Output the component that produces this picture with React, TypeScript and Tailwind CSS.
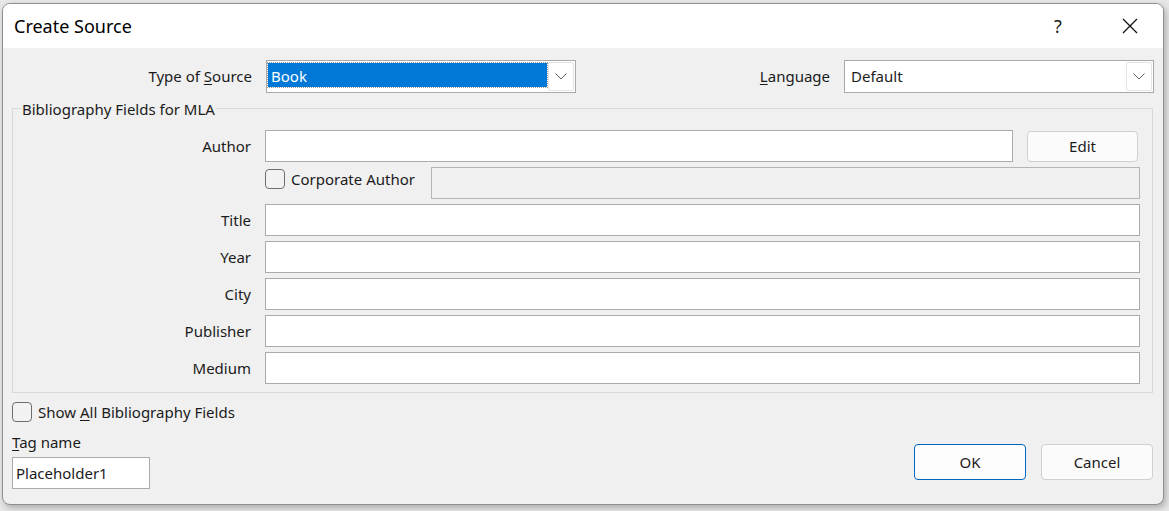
import React from "react";

function Chevron() {
  return (
    <svg width="12" height="7" viewBox="0 0 12 7">
      <path d="M0.5 0.5 L6 6 L11.5 0.5" stroke="#5f5f5f" strokeWidth="1" fill="none" />
    </svg>
  );
}

function Checkbox() {
  return <div className="w-[20px] h-[20px] rounded-[4px] border border-[#6e6e6e] bg-[#f2f2f2] shrink-0" />;
}

function Input({ className = "" }: { className?: string }) {
  return <div className={"h-[32px] border border-[#ababab] bg-white " + className} />;
}

function Row({ label, children }: { label: string; children?: React.ReactNode }) {
  return (
    <div className="flex items-center h-[32px]">
      <div className="w-[238px] text-right shrink-0">{label}</div>
      <div className="ml-[14px] flex-1 flex items-center">{children ?? <Input className="flex-1" />}</div>
    </div>
  );
}

export default function App() {
  return (
    <div className="w-[1169px] h-[511px] bg-[#e7e7e7] pt-[3px] pl-[2px] overflow-hidden font-['Noto_Sans',sans-serif] text-[15px] leading-[20px] text-[#1b1b1b]">
      <div className="w-[1162px] h-[502px] rounded-[8px] border border-[#8f8f8f] bg-[#f0f0f0] overflow-hidden shadow-[2px_3px_6px_rgba(0,0,0,0.25)] flex flex-col">
        {/* Title bar */}
        <div className="h-[44px] bg-white flex items-center pl-[11px] shrink-0">
          <span className="text-[18px] leading-[24px] text-black">Create Source</span>
          <span className="ml-auto w-[20px] text-center text-[18px] leading-[24px] text-[#1b1b1b]">?</span>
          <div className="ml-[54px] mr-[25px]">
            <svg width="16" height="16" viewBox="0 0 16 16">
              <path d="M1 1 L15 15 M15 1 L1 15" stroke="#111" strokeWidth="1.3" fill="none" />
            </svg>
          </div>
        </div>

        {/* Body */}
        <div className="flex-1 pl-[9px] pr-[8px] pt-[12px]">
          {/* Top row */}
          <div className="flex items-center h-[33px]">
            <div className="w-[240px] text-right shrink-0 -mt-[1px]">
              Type of <span className="underline underline-offset-2">S</span>ource
            </div>
            <div className="ml-[14px] w-[310px] h-[33px] border border-[#a9a9a9] bg-white flex p-[1px] shrink-0">
              <div className="flex-1 pt-[1px] pr-[1px]">
                <div className="h-[24px] bg-[#0078d7] outline outline-1 outline-dotted outline-[#9a9a9a] text-white pl-[3px] pt-[1px] flex items-center">
                  Book
                </div>
              </div>
              <div className="w-[26px] border border-[#e4e4e4] rounded-[2px] bg-white flex items-center justify-center">
                <Chevron />
              </div>
            </div>
            <div className="w-[254px] text-right shrink-0 -mt-[1px]">
              <span className="underline underline-offset-2">L</span>anguage
            </div>
            <div className="ml-[14px] w-[310px] h-[33px] border border-[#a9a9a9] bg-white flex p-[1px] shrink-0">
              <div className="flex-1 pl-[5px] flex items-center -mt-[1px]">Default</div>
              <div className="w-[26px] border border-[#e4e4e4] rounded-[2px] bg-white flex items-center justify-center">
                <Chevron />
              </div>
            </div>
          </div>

          {/* Group */}
          <fieldset className="mt-[5px] w-[1141px] border border-[#d9d9d9] pl-0 pr-[12px] pt-[12px] pb-[8px]">
            <legend className="ml-[8px] px-[1px] leading-[20px] translate-y-[1px]">Bibliography Fields for MLA</legend>
            <div className="flex flex-col gap-[5px]">
              <Row label="Author">
                <Input className="flex-1" />
                <button className="ml-[14px] mr-[2px] w-[111px] h-[31px] rounded-[4px] border border-[#d0d0d0] bg-[#fbfbfb] text-[#1b1b1b]">
                  Edit
                </button>
              </Row>
              <div className="flex items-start h-[32px]">
                <div className="w-[252px] shrink-0" />
                <div className="w-[166px] mt-[2px] flex items-center shrink-0">
                  <Checkbox />
                  <span className="ml-[6px] -mt-[1px]">Corporate Author</span>
                </div>
                <div className="flex-1 h-[32px] border border-[#b5b5b5] bg-[#f0f0f0]" />
              </div>
              <Row label="Title" />
              <Row label="Year" />
              <Row label="City" />
              <Row label="Publisher" />
              <Row label="Medium" />
            </div>
          </fieldset>

          {/* Show all */}
          <div className="mt-[9px] flex items-center h-[20px]">
            <Checkbox />
            <span className="ml-[6px]">
              Show <span className="underline underline-offset-2">A</span>ll Bibliography Fields
            </span>
          </div>

          {/* Bottom */}
          <div className="flex items-end">
            <div className="flex flex-col">
              <div className="mt-[10px]">
                <span className="underline underline-offset-2">T</span>ag name
              </div>
              <div className="mt-[5px] w-[138px] h-[32px] border border-[#ababab] bg-white pl-[3px] flex items-center">
                Placeholder1
              </div>
            </div>
            <div className="ml-auto mr-[2px] mb-[9px] flex gap-[15px]">
              <button className="w-[112px] h-[36px] rounded-[4px] border border-[#0067c0] bg-[#fdfdfd] text-[#1b1b1b]">
                OK
              </button>
              <button className="w-[112px] h-[36px] rounded-[4px] border border-[#d0d0d0] bg-[#fbfbfb] text-[#1b1b1b]">
                Cancel
              </button>
            </div>
          </div>
        </div>
      </div>
    </div>
  );
}
